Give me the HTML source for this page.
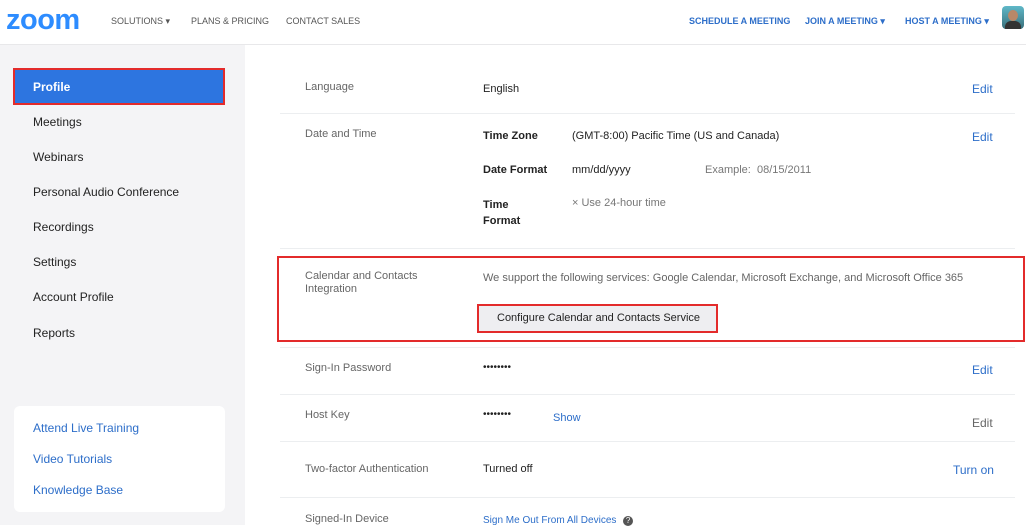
<!DOCTYPE html>
<html><head><meta charset="utf-8"><style>
*{margin:0;padding:0;box-sizing:border-box}
body{width:1026px;height:525px;overflow:hidden;background:#fff;font-family:"Liberation Sans",sans-serif;position:relative;color:#222}
.a{position:absolute;white-space:nowrap}
.nav{font-size:9px;color:#555;top:16px}
.navr{font-size:9px;color:#2d6ec9;top:16px;font-weight:bold}
.side{position:absolute;left:0;top:45px;width:245px;height:480px;background:#f4f4f6}
.si{font-size:12px;color:#222;left:33px}
.lbl{font-size:11px;color:#666;left:305px}
.val{font-size:11px;color:#222}
.edit{font-size:12px;color:#2d6ec9;left:972px}
.sep{position:absolute;left:280px;width:735px;height:1px;background:#eceef0}
.lnk{font-size:12px;color:#2d6ec9;left:33px}
</style></head><body>
<div class="a" style="left:6px;top:3px;font-size:29px;font-weight:bold;color:#2d8cff;letter-spacing:-0.5px;line-height:34px">zoom</div>
<div class="a nav" style="left:111px">SOLUTIONS ▾</div>
<div class="a nav" style="left:191px">PLANS &amp; PRICING</div>
<div class="a nav" style="left:286px">CONTACT SALES</div>
<div class="a navr" style="left:689px">SCHEDULE A MEETING</div>
<div class="a navr" style="left:805px">JOIN A MEETING ▾</div>
<div class="a navr" style="left:905px">HOST A MEETING ▾</div>
<div class="a" style="left:1002px;top:6px;width:22px;height:23px;border-radius:4px;background:linear-gradient(#5fb8c8,#3a6f7a);overflow:hidden"><div style="position:absolute;left:6px;top:4px;width:10px;height:11px;border-radius:50%;background:#b88868"></div><div style="position:absolute;left:3px;top:15px;width:16px;height:8px;background:#333;border-radius:6px 6px 0 0"></div></div>
<div class="a" style="left:0;top:44px;width:1026px;height:1px;background:#e8e8ea"></div>
<div class="side"></div>
<div class="a" style="left:13px;top:68px;width:212px;height:37px;border:2px solid #e32b2b;background:#2d75e0"></div>
<div class="a" style="left:33px;top:80px;font-size:12px;font-weight:bold;color:#fff">Profile</div>
<div class="a si" style="top:115px">Meetings</div>
<div class="a si" style="top:150px">Webinars</div>
<div class="a si" style="top:185px">Personal Audio Conference</div>
<div class="a si" style="top:220px">Recordings</div>
<div class="a si" style="top:255px">Settings</div>
<div class="a si" style="top:290px">Account Profile</div>
<div class="a si" style="top:326px">Reports</div>
<div class="a" style="left:14px;top:406px;width:211px;height:106px;background:#fff;border-radius:6px"></div>
<div class="a lnk" style="top:421px">Attend Live Training</div>
<div class="a lnk" style="top:452px">Video Tutorials</div>
<div class="a lnk" style="top:483px">Knowledge Base</div>

<div class="a lbl" style="top:81px">Language</div>
<div class="a val" style="left:483px;top:83px">English</div>
<div class="a edit" style="top:82px">Edit</div>
<div class="sep" style="top:113px"></div>
<div class="a lbl" style="top:128px">Date and Time</div>
<div class="a val" style="left:483px;top:130px;font-weight:bold">Time Zone</div>
<div class="a val" style="left:572px;top:130px">(GMT-8:00) Pacific Time (US and Canada)</div>
<div class="a edit" style="top:130px">Edit</div>
<div class="a val" style="left:483px;top:164px;font-weight:bold">Date Format</div>
<div class="a val" style="left:572px;top:164px">mm/dd/yyyy</div>
<div class="a val" style="left:705px;top:164px;color:#777">Example:&nbsp; 08/15/2011</div>
<div class="a val" style="left:483px;top:197px;font-weight:bold;line-height:16px">Time<br>Format</div>
<div class="a val" style="left:572px;top:197px;color:#777">× Use 24-hour time</div>
<div class="sep" style="top:248px"></div>
<div class="a" style="left:277px;top:256px;width:748px;height:86px;border:2px solid #e32b2b"></div>
<div class="a lbl" style="top:270px;line-height:13px">Calendar and Contacts<br>Integration</div>
<div class="a val" style="left:483px;top:272px;color:#666">We support the following services: Google Calendar, Microsoft Exchange, and Microsoft Office 365</div>
<div class="a" style="left:477px;top:304px;width:241px;height:29px;border:2px solid #e32b2b;background:#eeeef1"></div>
<div class="a val" style="left:497px;top:312px">Configure Calendar and Contacts Service</div>
<div class="sep" style="top:347px"></div>
<div class="a lbl" style="top:362px">Sign-In Password</div>
<div class="a val" style="left:483px;top:362px;font-size:10px">••••••••</div>
<div class="a edit" style="top:363px">Edit</div>
<div class="sep" style="top:394px"></div>
<div class="a lbl" style="top:409px">Host Key</div>
<div class="a val" style="left:483px;top:409px;font-size:10px">••••••••</div>
<div class="a" style="left:553px;top:412px;font-size:11px;color:#2d6ec9">Show</div>
<div class="a edit" style="top:416px;color:#666">Edit</div>
<div class="sep" style="top:441px"></div>
<div class="a lbl" style="top:463px">Two-factor Authentication</div>
<div class="a val" style="left:483px;top:463px">Turned off</div>
<div class="a edit" style="left:953px;top:463px">Turn on</div>
<div class="sep" style="top:497px"></div>
<div class="a lbl" style="top:513px">Signed-In Device</div>
<div class="a" style="left:483px;top:515px;font-size:10px;color:#2d6ec9">Sign Me Out From All Devices <span style="display:inline-block;width:10px;height:10px;border-radius:50%;background:#555;color:#fff;font-size:8px;text-align:center;line-height:10px;margin-left:4px">?</span></div>
</body></html>
